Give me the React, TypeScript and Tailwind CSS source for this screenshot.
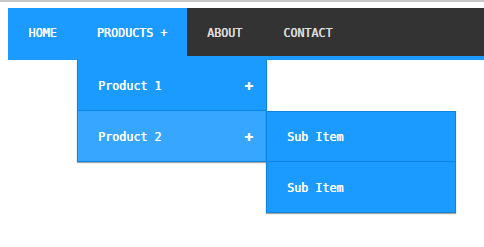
import React from "react";

const mono = { fontFamily: '"DejaVu Sans Mono", "Liberation Mono", monospace' };

export default function App() {
  return (
    <div className="w-[484px] h-[247px] bg-white relative overflow-hidden" style={mono}>
      <div className="h-[2px] bg-[#c6c6c6]" />
      <div className="pt-[6px] pl-[8px]">
        <nav className="flex h-[52px] bg-[#333333] border-b-4 border-[#1b9bff] text-[11.7px] font-normal [text-shadow:0.45px_0_0_currentColor]">
          <div className="flex items-center justify-center pt-[3px] w-[69px] bg-[#1b9bff] text-white">HOME</div>
          <div className="relative flex items-center justify-center pt-[3px] w-[110px] bg-[#1b9bff] text-white">
            PRODUCTS +
            <div className="absolute left-0 top-[52px] w-[190px] z-10 border border-t-0 border-[#0b84e3] shadow-[0_1px_1px_rgba(0,0,0,0.35)]">
              <div className="flex items-center justify-between h-[51px] pt-[3px] pl-[20px] pr-[13px] bg-[#1b9bff] text-white border-b border-[#0b84e3]">
                <span>Product 1</span>
                <span className="text-[14px] font-bold">+</span>
              </div>
              <div className="relative flex items-center justify-between h-[50px] pt-[3px] pl-[20px] pr-[13px] bg-[#36a6ff] text-white">
                <span>Product 2</span>
                <span className="text-[14px] font-bold">+</span>
                <div className="absolute left-[188px] top-0 w-[190px] border border-[#0b84e3] shadow-[0_1px_1px_rgba(0,0,0,0.35)] bg-[#1b9bff]">
                  <div className="flex items-center h-[50px] pt-[3px] pl-[20px] border-b border-[#0b84e3]">Sub Item</div>
                  <div className="flex items-center h-[50px] pt-[3px] pl-[20px]">Sub Item</div>
                </div>
              </div>
            </div>
          </div>
          <div className="flex items-center pt-[3px] pl-[20px] pr-[21px] text-[#dddddd]">ABOUT</div>
          <div className="flex items-center pt-[3px] px-[20px] text-[#dddddd]">CONTACT</div>
        </nav>
      </div>
    </div>
  );
}
